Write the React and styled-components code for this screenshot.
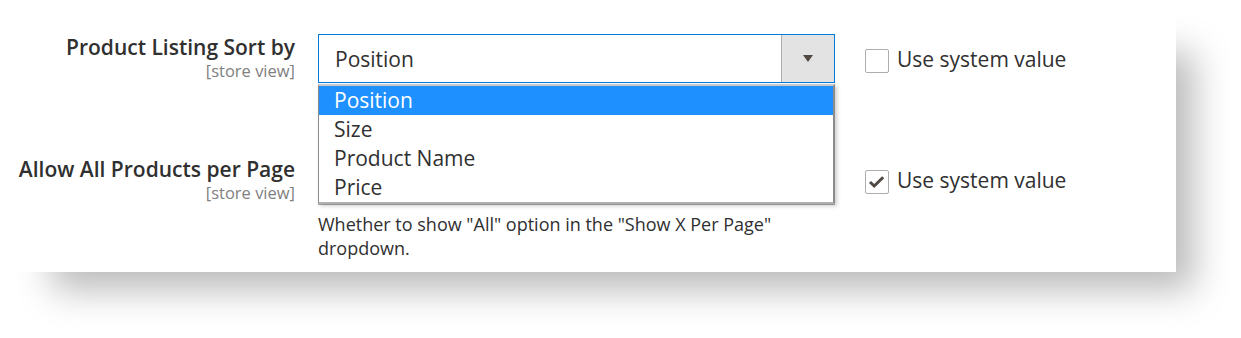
import React from "react";
import styled, { createGlobalStyle } from "styled-components";

const Global = createGlobalStyle`
  html, body { margin: 0; padding: 0; background: #ffffff; }
  body { font-family: "Open Sans", "Noto Sans", sans-serif; color: #303030; }
  * { box-sizing: border-box; }
`;

const Page = styled.main`
  min-height: 338px;
  width: 1241px;
  overflow: hidden;
`;

const Card = styled.section`
  width: 1176px;
  background: #ffffff;
  box-shadow: 35px 35px 34px -17px rgba(0, 0, 0, 0.27);
  padding: 34px 0 12px 0;
  display: flex;
  flex-direction: column;
  gap: 73px;
`;

const Row = styled.div`
  display: flex;
  align-items: flex-start;
`;

const LabelCol = styled.div`
  width: 295px;
  margin-right: 23px;
  padding-top: 2px;
  text-align: right;
  display: flex;
  flex-direction: column;
`;

const LabelText = styled.span`
  font-size: 21px;
  font-weight: 600;
  line-height: 23px;
  color: #303030;
`;

const Scope = styled.span`
  font-size: 16.5px;
  line-height: 23px;
  color: #808080;
`;

const ControlCol = styled.div`
  width: 517px;
  position: relative;
`;

const Select = styled.div`
  height: 49px;
  border: 1px solid ${(p) => (p.$focused ? "#007bdb" : "#adadad")};
  background: #ffffff;
  display: flex;
  align-items: center;
  font-size: 21px;
  color: #303030;
`;

const SelectValue = styled.span`
  padding-left: 16px;
  flex: 1;
`;

const ArrowBox = styled.span`
  width: 53px;
  align-self: stretch;
  background: #e3e3e3;
  border-left: 1px solid #adadad;
  display: flex;
  align-items: center;
  justify-content: center;
`;

const Arrow = styled.span`
  width: 0;
  height: 0;
  border-left: 5.5px solid transparent;
  border-right: 5.5px solid transparent;
  border-top: 7px solid #514943;
`;

const Dropdown = styled.ul`
  position: absolute;
  top: 50px;
  left: 0;
  width: 517px;
  margin: 0;
  padding: 0;
  list-style: none;
  background: #ffffff;
  border: 1px solid #8c8c8c;
  border-top: 2px solid #c8c8c8;
  border-right: 2px solid #8c8c8c;
  border-bottom: 2px solid #b0b0b0;
  box-shadow: 2px 2px 4px rgba(0, 0, 0, 0.2);
  z-index: 5;
`;

const Option = styled.li`
  font-size: 21px;
  line-height: 29px;
  height: 29px;
  padding-left: 15px;
  background: ${(p) => (p.$active ? "#1e90ff" : "#ffffff")};
  color: ${(p) => (p.$active ? "#ffffff" : "#303030")};
`;

const Note = styled.p`
  margin: 7px 0 0 0;
  font-size: 18px;
  line-height: 24px;
  color: #303030;
`;

const UseDefault = styled.label`
  margin-left: 30px;
  padding-top: ${(p) => (p.$second ? "14px" : "15px")};
  display: flex;
  align-items: flex-start;
  gap: 8px;
`;

const UseText = styled.span`
  font-size: 21px;
  line-height: 24px;
  margin-top: -2px;
  color: #303030;
`;

const Box = styled.span`
  width: 24px;
  height: 24px;
  border: 1px solid #adadad;
  border-radius: 2px;
  background: #ffffff;
  display: flex;
  align-items: center;
  justify-content: center;
`;

const Check = () => (
  <svg width="18" height="18" viewBox="0 0 18 18">
    <path
      d="M2 9 L6.2 13 L15.2 4.2"
      fill="none"
      stroke="#514943"
      strokeWidth="3"
      strokeLinejoin="miter"
    />
  </svg>
);

const options = ["Position", "Size", "Product Name", "Price"];

export default function App() {
  return (
    <Page>
      <Global />
      <Card>
        <Row>
          <LabelCol>
            <LabelText>Product Listing Sort by</LabelText>
            <Scope>[store view]</Scope>
          </LabelCol>
          <ControlCol>
            <Select $focused>
              <SelectValue>Position</SelectValue>
              <ArrowBox>
                <Arrow />
              </ArrowBox>
            </Select>
            <Dropdown>
              {options.map((o, i) => (
                <Option key={o} $active={i === 0}>
                  {o}
                </Option>
              ))}
            </Dropdown>
          </ControlCol>
          <UseDefault>
            <Box />
            <UseText>Use system value</UseText>
          </UseDefault>
        </Row>
        <Row>
          <LabelCol>
            <LabelText>Allow All Products per Page</LabelText>
            <Scope>[store view]</Scope>
          </LabelCol>
          <ControlCol>
            <Select>
              <SelectValue>No</SelectValue>
              <ArrowBox>
                <Arrow />
              </ArrowBox>
            </Select>
            <Note>
              Whether to show "All" option in the "Show X Per Page" dropdown.
            </Note>
          </ControlCol>
          <UseDefault $second>
            <Box>
              <Check />
            </Box>
            <UseText>Use system value</UseText>
          </UseDefault>
        </Row>
      </Card>
    </Page>
  );
}
